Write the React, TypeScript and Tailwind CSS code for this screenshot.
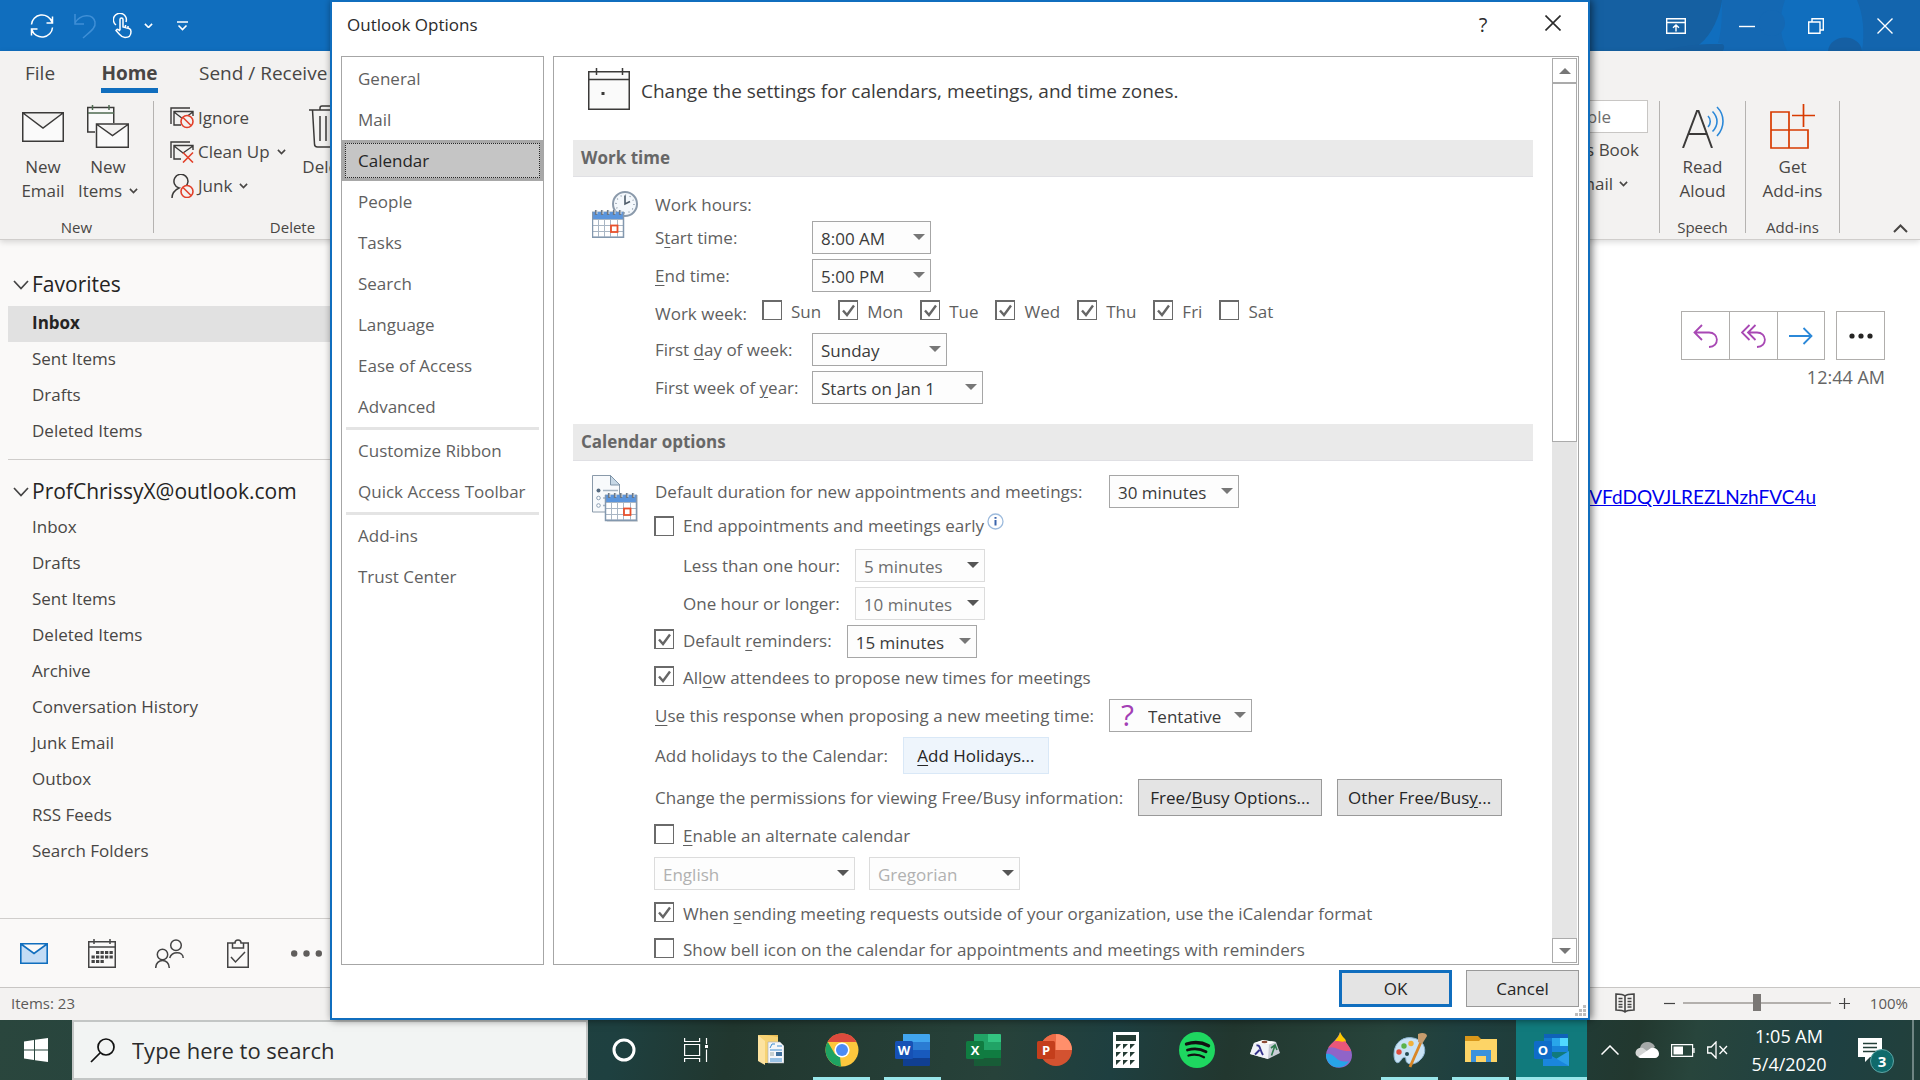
import { useState, type ReactNode } from 'react';

const FOLDER_ROW = 'text-[17px] leading-[34px] pb-0.5';

const navGroups = [
  ['General', 'Mail', 'Calendar', 'People', 'Tasks', 'Search', 'Language', 'Ease of Access', 'Advanced'],
  ['Customize Ribbon', 'Quick Access Toolbar'],
  ['Add-ins', 'Trust Center'],
];

const favorites = ['Inbox', 'Sent Items', 'Drafts', 'Deleted Items'];
const folders = [
  'Inbox',
  'Drafts',
  'Sent Items',
  'Deleted Items',
  'Archive',
  'Conversation History',
  'Junk Email',
  'Outbox',
  'RSS Feeds',
  'Search Folders',
];

const days = [
  { name: 'Sun', on: false },
  { name: 'Mon', on: true },
  { name: 'Tue', on: true },
  { name: 'Wed', on: true },
  { name: 'Thu', on: true },
  { name: 'Fri', on: true },
  { name: 'Sat', on: false },
];

function Key({ children }: { children: ReactNode }) {
  return <span className="underline decoration-1 underline-offset-3">{children}</span>;
}

function Chevron({ className = 'w-[9px]' }: { className?: string }) {
  return (
    <svg viewBox="0 0 10 6" className={className} fill="none" stroke="currentColor" strokeWidth="1.8">
      <path d="M1 1l4 4 4-4" />
    </svg>
  );
}

/* ---------- form parts ---------- */

interface SelectProps {
  id: string;
  value: string;
  width: string;
  tone?: 'normal' | 'muted' | 'disabled';
  label?: string;
  icon?: ReactNode;
}

function Select({ id, value, width, tone = 'normal', label, icon }: SelectProps) {
  const tones = {
    normal: 'border-[#a6a6a6] text-[#3b3b3b]',
    muted: 'border-[#dcdcdc] text-[#6e6e6e]',
    disabled: 'border-[#dcdcdc] text-[#b1b1b1]',
  };
  return (
    <span className={`relative inline-flex h-[33px] shrink-0 ${width}`}>
      <select
        id={id}
        aria-label={label}
        disabled={tone !== 'normal'}
        className={`h-full w-full appearance-none border bg-[#fdfdfd] pt-[2px] pr-5 opacity-100 ${icon ? 'pl-[38px]' : 'pl-2'} ${tones[tone]}`}
      >
        <option>{value}</option>
      </select>
      {icon}
      <svg
        viewBox="0 0 12 6"
        className={`pointer-events-none absolute top-[13px] right-[6px] h-[6px] w-[12px] ${tone === 'normal' ? 'text-[#777]' : 'text-[#555]'}`}
        fill="currentColor"
      >
        <path d="M0 0h12L6 6z" />
      </svg>
    </span>
  );
}

function Check({ id, on }: { id: string; on: boolean }) {
  const [checked, setChecked] = useState(on);
  return (
    <span className="relative mb-[6px] flex size-5 shrink-0">
      <input
        id={id}
        type="checkbox"
        checked={checked}
        onChange={() => setChecked(!checked)}
        className="peer size-5 appearance-none border border-t-2 border-l-2 border-[#6a6a6a] bg-white"
      />
      <svg
        viewBox="0 0 20 20"
        className="pointer-events-none absolute inset-0 hidden peer-checked:block"
        fill="none"
        stroke="#666"
        strokeWidth="2.4"
      >
        <path d="M5 10.5l4 4.5 7-9.5" />
      </svg>
    </span>
  );
}

function CheckRow({ id, on, height = 'h-[41px]', children }: { id: string; on: boolean; height?: string; children: ReactNode }) {
  return (
    <div className={`flex items-center gap-[9px] ${height}`}>
      <Check id={id} on={on} />
      <label htmlFor={id} className="pb-0.5 whitespace-nowrap">
        {children}
      </label>
    </div>
  );
}

function PushButton({ className, children }: { className: string; children: ReactNode }) {
  return (
    <button className={`h-[37px] shrink-0 whitespace-nowrap text-[#262626] ${className}`}>{children}</button>
  );
}

function SectionBar({ children }: { children: ReactNode }) {
  return (
    <h2 className="flex h-[37px] items-center border-b border-[#e0e0e4] bg-[#eaeaea] pl-2 text-[17px] font-bold text-[#676767]">
      {children}
    </h2>
  );
}

/* ---------- dialog icons ---------- */

function CalendarGrid({ x, y }: { x: number; y: number }) {
  return (
    <g transform={`translate(${x} ${y})`}>
      <rect x="0.5" y="3" width="31" height="25" fill="#fff" stroke="#8fa3b8" />
      <rect x="0" y="3" width="32" height="7" fill="#5b95dc" />
      <path d="M0 10.5h32M0 16.5h32M0 22.5h32M6.5 10v18M12.5 10v18M18.5 10v18M25.500 10v18" stroke="#a9b6c4" />
      <path d="M0.500 3v25.500h31V3" fill="none" stroke="#8398ae" strokeWidth="1.500" />
      <path d="M4 1v5M10 1v5M16 1v5M22 1v5M28 1v5" stroke="#6d7885" strokeWidth="2.200" />
      <path d="M5 1v4M11 1v4M17 1v4M23 1v4M29 1v4" stroke="#e8eef5" strokeWidth="0.900" />
      <rect x="19" y="16.500" width="6.500" height="6.500" fill="#fff" stroke="#e8502c" strokeWidth="1.800" />
    </g>
  );
}

function WorkTimeIcon() {
  return (
    <svg viewBox="0 0 46 47" className="h-[47px] w-[46px] shrink-0">
      <circle cx="33" cy="13" r="12" fill="#f4f8fc" stroke="#8b9aab" strokeWidth="2" />
      <circle cx="33" cy="13" r="9" fill="none" stroke="#7c8b9b" strokeWidth="1.200" strokeDasharray="1 3.700" />
      <path d="M33 4.500V13l5-2.500" fill="none" stroke="#4d5b69" strokeWidth="1.600" />
      <CalendarGrid x={0} y={18} />
    </svg>
  );
}

function CalendarOptionsIcon() {
  return (
    <svg viewBox="0 0 46 47" className="h-[47px] w-[46px] shrink-0">
      <path d="M0.500 0.500h18l9 9V37h-27z" fill="#f8fafc" stroke="#8a9aaa" />
      <path d="M18.500 0.500v9.500h9.500z" fill="#c7d8e6" stroke="#7f95a9" />
      <circle cx="6.500" cy="15.500" r="2" fill="#566b80" />
      <circle cx="6.500" cy="23" r="1.800" fill="#fff" stroke="#8ca0b5" />
      <circle cx="6.500" cy="30.500" r="1.800" fill="#fff" stroke="#8ca0b5" />
      <path d="M11 15.500h15M11 23h4M11 30.500h4" stroke="#a5b4c2" strokeWidth="1.500" />
      <path d="M15 46h31V20" fill="none" stroke="#ccc" strokeWidth="1" />
      <CalendarGrid x={13} y={17} />
    </svg>
  );
}

function HeaderCalendarIcon() {
  return (
    <svg viewBox="0 0 42 42" className="size-[42px] shrink-0" fill="none" stroke="#3b3a39" strokeWidth="1.500">
      <rect x="0.750" y="3.750" width="40.500" height="37.500" fill="#fafafa" />
      <path d="M1 11.500h40M8.500 0v7M34.500 0v7" />
      <rect x="13.500" y="24" width="3" height="3" fill="#3b3a39" stroke="none" />
    </svg>
  );
}

/* ---------- dialog ---------- */

function OptionsDialog() {
  const [page, setPage] = useState('Calendar');

  return (
    <div
      role="dialog"
      aria-label="Outlook Options"
      className="absolute inset-x-[330px] top-0 bottom-[60px] z-10 flex flex-col border-2 border-[#106ebe] bg-white text-[17px] text-[#5f5f5f] shadow-[2px_0_8px_rgba(0,0,0,0.55)]"
    >
      <header className="flex h-[54px] shrink-0 items-start pt-2 pl-[15px] text-[#2b2b2b]">
        <h1 className="flex-1 text-[17px] leading-[30px]">Outlook Options</h1>
        <button aria-label="Help" className="h-[30px] w-[70px] text-[20px] leading-[28px]">
          ?
        </button>
        <button aria-label="Close" className="flex h-[26px] w-[70px] items-center justify-center">
          <svg viewBox="0 0 16 16" className="size-4" stroke="currentColor" strokeWidth="1.600">
            <path d="M0.500 0.500l15 15M15.500 0.500l-15 15" />
          </svg>
        </button>
      </header>

      <div className="flex min-h-0 flex-1 gap-[9px] px-[9px]">
        <nav className="w-[203px] shrink-0 border border-[#a6a6a6] pt-px">
          {navGroups.map((group, g) => (
            <div key={g}>
              {g > 0 && <hr className="mx-1 h-[3px] border-0 bg-[#e4e4e4]" />}
              {group.map((item) => (
                <button
                  key={item}
                  onClick={() => setPage(item)}
                  className={`block h-[41px] w-full text-left whitespace-nowrap ${
                    item === page ? 'bg-[#a8a8a8] p-[3px] text-[#262626]' : 'pl-4'
                  }`}
                >
                  {item === page ? (
                    <span className="flex h-full items-center border border-dotted border-[#262626] bg-[#c5c5c5] pl-3">
                      {item}
                    </span>
                  ) : (
                    item
                  )}
                </button>
              ))}
            </div>
          ))}
        </nav>

        <section className="flex min-w-0 flex-1 overflow-hidden border border-[#a6a6a6]">
          <div className="min-w-0 flex-1 overflow-hidden px-[19px]">
            <div className="flex h-[83px] items-start gap-[11px] pt-[11px] pl-[15px]">
              <HeaderCalendarIcon />
              <p className="pt-2 text-[19px] leading-[30px] whitespace-nowrap text-[#3b3b3b]">
                Change the settings for calendars, meetings, and time zones.
              </p>
            </div>

            <SectionBar>Work time</SectionBar>
            <div className="flex items-start gap-4 pt-[14px] pb-5 pl-[19px]">
              <WorkTimeIcon />
              <div>
                <div className="mb-[2px] flex h-7 items-center pl-px">Work hours:</div>
                <div className="flex flex-col gap-[5px]">
                  <div className="flex items-center">
                    <label htmlFor="start" className="w-[158px] pl-px">
                      S<Key>t</Key>art time:
                    </label>
                    <Select id="start" value="8:00 AM" width="w-[119px]" />
                  </div>
                  <div className="flex items-center">
                    <label htmlFor="end" className="w-[158px] pl-px">
                      <Key>E</Key>nd time:
                    </label>
                    <Select id="end" value="5:00 PM" width="w-[119px]" />
                  </div>
                </div>
                <div className="flex h-[41px] items-center">
                  <span className="w-[108px] pt-[2px] pl-px">Work week:</span>
                  <div className="flex gap-[17px]">
                    {days.map((day) => (
                      <CheckRow key={day.name} id={day.name} on={day.on}>
                        {day.name}
                      </CheckRow>
                    ))}
                  </div>
                </div>
                <div className="flex flex-col gap-[5px]">
                  <div className="flex items-center">
                    <label htmlFor="firstday" className="w-[158px] pl-px whitespace-nowrap">
                      First <Key>d</Key>ay of week:
                    </label>
                    <Select id="firstday" value="Sunday" width="w-[135px]" />
                  </div>
                  <div className="flex items-center">
                    <label htmlFor="firstweek" className="w-[158px] pl-px whitespace-nowrap">
                      First week of <Key>y</Key>ear:
                    </label>
                    <Select id="firstweek" value="Starts on Jan 1" width="w-[171px]" />
                  </div>
                </div>
              </div>
            </div>

            <SectionBar>Calendar options</SectionBar>
            <div className="flex items-start gap-4 pt-[14px] pl-[19px] whitespace-nowrap">
              <CalendarOptionsIcon />
              <div>
                <div className="flex items-center">
                  <label htmlFor="duration" className="w-[455px] pl-px">
                    Default duration for new appointments and meetings:
                  </label>
                  <Select id="duration" value="30 minutes" width="w-[130px]" />
                </div>
                <CheckRow id="early" on={false}>
                  End appointments and meetings early
                  <svg viewBox="0 0 17 17" className="mb-3 ml-[3px] inline size-[17px]" fill="none" aria-label="Info">
                    <circle cx="8.500" cy="8.500" r="7.500" stroke="#9dbbdd" strokeWidth="1.300" />
                    <path d="M8.500 7v5.500M8.500 4v1.800" stroke="#3a64ac" strokeWidth="2" />
                  </svg>
                </CheckRow>
                <div className="flex flex-col gap-[5px]">
                  <div className="flex items-center gap-[15px] pl-[29px]">
                    <label htmlFor="short">Less than one hour:</label>
                    <Select id="short" value="5 minutes" width="w-[130px]" tone="muted" />
                  </div>
                  <div className="flex items-center gap-[15px] pl-[29px]">
                    <label htmlFor="long">One hour or longer:</label>
                    <Select id="long" value="10 minutes" width="w-[130px]" tone="muted" />
                  </div>
                  <div className="flex items-center gap-[15px]">
                    <CheckRow id="reminders" on height="h-[33px]">
                      Default <Key>r</Key>eminders:
                    </CheckRow>
                    <Select id="remindertime" label="Reminder time" value="15 minutes" width="w-[130px]" />
                  </div>
                </div>
                <CheckRow id="propose" on>
                  All<Key>o</Key>w attendees to propose new times for meetings
                </CheckRow>
                <div className="flex flex-col gap-[5px]">
                  <div className="flex items-center">
                    <label htmlFor="response" className="w-[455px] pl-px">
                      <Key>U</Key>se this response when proposing a new meeting time:
                    </label>
                    <Select
                      id="response"
                      value="Tentative"
                      width="w-[143px]"
                      icon={
                        <span className="pointer-events-none absolute top-0 left-3 text-[30px] leading-[32px] text-[#a33fb5]">
                          ?
                        </span>
                      }
                    />
                  </div>
                  <div className="flex items-center gap-[15px] pl-px">
                    <span>Add holidays to the Calendar:</span>
                    <PushButton className="w-[146px] border border-[#d9e8f7] bg-[#eef5fc]">
                      <Key>A</Key>dd Holidays...
                    </PushButton>
                  </div>
                  <div className="flex items-center gap-[15px] pl-px">
                    <span>Change the permissions for viewing Free/Busy information:</span>
                    <PushButton className="w-[184px] border border-[#999] bg-[#e4e4e4]">
                      Free/<Key>B</Key>usy Options...
                    </PushButton>
                    <PushButton className="w-[165px] border border-[#999] bg-[#e4e4e4]">
                      Other Free/Bus<Key>y</Key>...
                    </PushButton>
                  </div>
                </div>
                <CheckRow id="alternate" on={false}>
                  <Key>E</Key>nable an alternate calendar
                </CheckRow>
                <div className="mb-[7px] flex gap-[14px]">
                  <Select id="altlang" label="Calendar language" value="English" width="w-[201px]" tone="disabled" />
                  <Select id="alttype" label="Calendar type" value="Gregorian" width="w-[151px]" tone="disabled" />
                </div>
                <CheckRow id="ical" on height="h-9">
                  When <Key>s</Key>ending meeting requests outside of your organization, use the iCalendar format
                </CheckRow>
                <CheckRow id="bell" on={false} height="h-9">
                  Show bell icon on the calendar for appointments and meetings with reminders
                </CheckRow>
              </div>
            </div>
          </div>

          <div className="my-px mr-px flex w-[25px] shrink-0 flex-col bg-[#e5e5e5]">
            <button aria-label="Scroll up" className="flex h-[25px] items-center justify-center border border-[#ababab] bg-white">
              <svg viewBox="0 0 12 6" className="w-3" fill="#777">
                <path d="M6 0l6 6H0z" />
              </svg>
            </button>
            <div className="h-[359px] border border-[#ababab] bg-white" />
            <button aria-label="Scroll down" className="mt-auto flex h-[25px] items-center justify-center border border-[#ababab] bg-white">
              <svg viewBox="0 0 12 6" className="w-3" fill="#777">
                <path d="M0 0h12L6 6z" />
              </svg>
            </button>
          </div>
        </section>
      </div>

      <footer className="relative flex h-[53px] shrink-0 justify-end gap-[14px] px-[9px] pt-[5px]">
        <PushButton className="w-[113px] border-3 border-[#106ebe] bg-[#e4e4e4]">OK</PushButton>
        <PushButton className="w-[113px] border border-[#999] bg-[#e4e4e4]">Cancel</PushButton>
        <svg viewBox="0 0 11 11" className="absolute right-[2px] bottom-[2px] size-[11px]" fill="#bdbdbd">
          <path d="M8 0h3v3H8zM8 4h3v3H8zM4 4h3v3H4zM8 8h3v3H8zM4 8h3v3H4zM0 8h3v3H0z" />
        </svg>
      </footer>
    </div>
  );
}

/* ---------- main window ---------- */

function TitleBar() {
  return (
    <header className="relative flex h-[51px] shrink-0 items-center justify-between overflow-hidden bg-[#106ebe] text-white">
      <svg viewBox="0 0 340 51" className="absolute top-0 right-0 h-[51px] w-[340px]">
        <path d="M0 0h142c-2 16-10 34-22 44-6 5-14 7-24 7H0z" fill="#1560a2" />
        <path d="M80 51c10-2 30-8 62-7 5 0 3 4 1 7z" fill="#155ea0" />
        <path d="M142 0h63c-6 16-6 34 2 51h-64c2-4 2-8-5-8 4-13 4-28 4-43z" fill="#1468b3" />
        <circle cx="192" cy="23" r="13" fill="#1468b3" />
        <path d="M277 0c6 14 8 32 5 51h58V0z" fill="#1365ae" />
        <path d="M248 51c2-18 32-18 34 0z" fill="#155fa3" />
      </svg>
      <div className="relative flex items-center pl-[30px]">
        <button aria-label="Send/Receive All">
          <svg viewBox="0 0 24 24" className="size-6" fill="none" stroke="currentColor" strokeWidth="1.500">
            <path d="M1.500 10.500A10.500 10 0 0 1 22 8M22.500 13.500A10.500 10 0 0 1 2 16M22.500 2.500v6.500h-6M1.500 21.500v-6.500h6" />
          </svg>
        </button>
        <button aria-label="Undo" className="ml-[19px] text-[#3f8fd6]">
          <svg viewBox="0 0 24 26" className="h-[26px] w-6" fill="none" stroke="currentColor" strokeWidth="1.500">
            <path d="M2 1v10h9M2 10C7 1 20 0 22 9c1 6-4 9-12 16" />
          </svg>
        </button>
        <button aria-label="Touch/Mouse Mode" className="ml-4 flex items-center gap-3">
          <svg viewBox="0 0 19 26" className="h-[26px] w-[19px]" fill="none" stroke="currentColor" strokeWidth="1.500">
            <path d="M3 12A6.500 6.500 0 1 1 13 9M7 17V6.500c0-2 3-2 3 0V14l6 1.500c1.500.5 2 1.500 2 3 0 5-2 6-6 6-4 0-4-2-9-7 1-2 3-1 4 .5M12.500 12v3M15 13v3" />
          </svg>
          <Chevron />
        </button>
        <button aria-label="Customize Quick Access Toolbar" className="ml-6">
          <svg viewBox="0 0 11 10" className="w-[11px]" fill="none" stroke="currentColor" strokeWidth="1.600">
            <path d="M0 1h11M1.500 4.500l4 4 4-4" />
          </svg>
        </button>
      </div>
      <div className="relative flex items-center gap-[53px] pr-[27px]">
        <button aria-label="Ribbon Display Options">
          <svg viewBox="0 0 20 16" className="h-4 w-5" fill="none" stroke="currentColor" strokeWidth="1.400">
            <path d="M.7.7h18.600v14.600H.7zM.7 4.500h18.600M10 13.500V7M7 9.800L10 7l3 2.800" />
          </svg>
        </button>
        <button aria-label="Minimize">
          <svg viewBox="0 0 16 16" className="size-4" stroke="currentColor" strokeWidth="1.400">
            <path d="M0 8.500h16" />
          </svg>
        </button>
        <button aria-label="Restore">
          <svg viewBox="0 0 16 16" className="size-4" fill="none" stroke="currentColor" strokeWidth="1.400">
            <path d="M.7 4h11.300v11.300H.7zM4 4V.7h11.300V12H12" />
          </svg>
        </button>
        <button aria-label="Close window">
          <svg viewBox="0 0 16 16" className="size-4" stroke="currentColor" strokeWidth="1.400">
            <path d="M.5.5l15 15M15.500.5l-15 15" />
          </svg>
        </button>
      </div>
    </header>
  );
}

function RibbonGroup({ label, width, children }: { label: string; width: string; children: ReactNode }) {
  return (
    <div className={`flex h-[132px] shrink-0 flex-col border-r border-[#b5b3b1] ${width}`}>
      <div className="flex flex-1 items-start">{children}</div>
      <div className="text-center text-[15px] leading-[11px] text-[#484644]">{label}</div>
    </div>
  );
}

function BigButton({ icon, className, children }: { icon: ReactNode; className: string; children: ReactNode }) {
  return (
    <button className={`flex shrink-0 flex-col items-center pt-[3px] leading-6 ${className}`}>
      <span className="mb-[6px] flex h-[45px] items-center">{icon}</span>
      {children}
    </button>
  );
}

function MailStack({ children }: { children: ReactNode }) {
  return (
    <svg viewBox="0 0 24 22" className="h-[22px] w-6" fill="none" stroke="#3b3a39" strokeWidth="1.400">
      <path d="M1 17V1h19" />
      <path d="M23 9V4.500H4V18h7M4 5l9 7 10-7" />
      {children}
    </svg>
  );
}

function Ribbon() {
  return (
    <div className="relative z-1 flex h-[189px] shrink-0 flex-col border-b border-[#d0cecc] bg-[#f3f2f1] text-[17px] text-[#484644] shadow-[0_2px_6px_rgba(0,0,0,0.15)]">
      <nav className="flex h-[50px] items-start pt-[7px] pl-[25px] text-[19px] leading-[30px]">
        <button className="w-[76px] text-left">File</button>
        <button className="w-[57px] border-b-5 border-[#106ebe] text-center font-bold">Home</button>
        <button className="ml-[41px] whitespace-nowrap">Send / Receive</button>
      </nav>
      <div className="flex min-w-0 flex-1 justify-between">
        <div className="flex">
          <RibbonGroup label="New" width="w-[154px]">
            <BigButton
              className="ml-[10px] w-[66px]"
              icon={
                <svg viewBox="0 0 42 30" className="w-[42px]" fill="#fafafa" stroke="#3b3a39" strokeWidth="1.500">
                  <path d="M.75.75h40.500v28.500H.75zM1 1l20 15L41 1" />
                </svg>
              }
            >
              <span>New</span>
              <span>Email</span>
            </BigButton>
            <BigButton
              className="w-[64px]"
              icon={
                <svg viewBox="0 0 42 43" className="w-[42px]" fill="#fafafa" stroke="#3b3a39" strokeWidth="1.500">
                  <path d="M8 27H.75V2.500h26V18" />
                  <path d="M1 8h26M5.500 0v5M22 0v5" stroke="#4f6b52" />
                  <path d="M9.500 19h31.800v23.200H9.500zM10 19.500l15.500 11L41 19.500" />
                </svg>
              }
            >
              <span>New</span>
              <span className="flex items-center gap-[7px] whitespace-nowrap">
                Items <Chevron />
              </span>
            </BigButton>
          </RibbonGroup>
          <RibbonGroup label="Delete" width="w-[278px]">
            <div className="flex w-[138px] flex-col pl-4 leading-[34px]">
              <button className="flex items-center gap-1">
                <MailStack>
                  <circle cx="17" cy="14.500" r="6" fill="#f3f2f1" stroke="#e2402a" strokeWidth="1.600" />
                  <path d="M13 10.500l8 8" stroke="#e2402a" strokeWidth="1.600" />
                </MailStack>
                Ignore
              </button>
              <button className="flex items-center gap-1 whitespace-nowrap">
                <MailStack>
                  <path d="M13 11.500l10 10M23 11.500l-10 10" stroke="#e2402a" strokeWidth="1.600" />
                </MailStack>
                Clean Up <Chevron className="ml-[3px] w-[9px]" />
              </button>
              <button className="flex items-center gap-1">
                <svg viewBox="0 0 24 24" className="size-6" fill="none" stroke="#3b3a39" strokeWidth="1.500">
                  <path d="M2 24c0-5 3-8 7-10a7 7 0 1 1 6-1" />
                  <circle cx="17" cy="17.500" r="6" fill="#f3f2f1" stroke="#e2402a" strokeWidth="1.600" />
                  <path d="M13 13.500l8 8" stroke="#e2402a" strokeWidth="1.600" />
                </svg>
                Junk <Chevron className="ml-[3px] w-[9px]" />
              </button>
            </div>
            <BigButton
              className="w-[72px]"
              icon={
                <svg viewBox="0 0 38 43" className="w-[38px]" fill="none" stroke="#3b3a39" strokeWidth="1.500">
                  <path d="M0 5h38M3.500 5l2 34c0 2 1 3 3 3h21c2 0 3-1 3-3l2-34M11 5V3c0-1 1-2 2-2h12c1 0 2 1 2 2v2M11 11v25M17 11v25M23 11v25M29 11v25" />
                </svg>
              }
            >
              <span>Delete</span>
            </BigButton>
          </RibbonGroup>
        </div>
        <div className="flex">
          <div className="flex h-[132px] w-[260px] flex-col items-end border-r border-[#b5b3b1] pr-[11px] leading-[34px]">
            <input
              aria-label="Search People"
              defaultValue="Search People"
              className="-mt-px h-[33px] w-[200px] border border-[#c8c6c4] bg-white pr-9 text-right text-[#6e6e6e]"
            />
            <button className="pr-[9px]">Address Book</button>
            <button className="flex items-center gap-[6px] pr-5">
              Filter Email <Chevron />
            </button>
          </div>
          <RibbonGroup label="Speech" width="w-[86px]">
            <BigButton
              className="w-full"
              icon={
                <svg viewBox="0 0 42 42" className="w-[42px]" fill="none" strokeWidth="2">
                  <path d="M1 42L15 5h1.500L30 42M6 28h19" stroke="#3b3a39" />
                  <path d="M26 10c3 3 3 8 0 11M30.500 5.500c6 6 6 14 0 20M35 1c8 8 8 20 0 29" stroke="#2b88d8" strokeWidth="1.600" />
                </svg>
              }
            >
              <span>Read</span>
              <span>Aloud</span>
            </BigButton>
          </RibbonGroup>
          <RibbonGroup label="Add-ins" width="w-[94px]">
            <BigButton
              className="w-full"
              icon={
                <svg viewBox="0 0 45 45" className="w-[45px]" fill="none" stroke="#d83b01" strokeWidth="1.700">
                  <path d="M1 8h18v36H1zM1 26h37v18H19V26M33.500 0v23M22 11.500h23" />
                </svg>
              }
            >
              <span>Get</span>
              <span>Add-ins</span>
            </BigButton>
          </RibbonGroup>
          <button aria-label="Collapse the Ribbon" className="flex w-[80px] items-end justify-end pr-3 pb-[6px]">
            <svg viewBox="0 0 15 9" className="w-[15px]" fill="none" stroke="currentColor" strokeWidth="2">
              <path d="M1 8l6.500-6.500L14 8" />
            </svg>
          </button>
        </div>
      </div>
    </div>
  );
}

function FolderHeading({ children }: { children: ReactNode }) {
  return (
    <h2 className="flex h-9 items-center pl-[13px] text-[21px] text-[#252423]">
      <svg viewBox="0 0 16 10" className="mr-[3px] w-4" fill="none" stroke="#444" strokeWidth="1.700">
        <path d="M1 1l7 7.500L15 1" />
      </svg>
      {children}
    </h2>
  );
}

function Sidebar() {
  return (
    <aside className="flex w-[380px] shrink-0 flex-col bg-[#faf9f8] text-[#484644]">
      <div className="flex-1 pt-[27px]">
        <FolderHeading>Favorites</FolderHeading>
        <ul className="mt-[3px]">
          {favorites.map((name, i) => (
            <li
              key={name}
              className={`${FOLDER_ROW} ${i === 0 ? 'ml-2 bg-[#e1e1e1] pl-6 font-bold text-[#252423]' : 'pl-8'}`}
            >
              {name}
            </li>
          ))}
        </ul>
        <hr className="mt-[9px] mb-[14px] ml-2 border-[#cfcdcb]" />
        <FolderHeading>ProfChrissyX@outlook.com</FolderHeading>
        <ul>
          {folders.map((name) => (
            <li key={name} className={`${FOLDER_ROW} pl-8`}>
              {name}
            </li>
          ))}
        </ul>
      </div>
      <nav className="flex h-[69px] items-center border-t border-[#d0cecc] pl-5">
        <button aria-label="Mail" className="w-[68px]">
          <svg viewBox="0 0 28 21" className="w-7" fill="#c3dcf5" stroke="#106ebe" strokeWidth="1.600">
            <path d="M.8.800h26.400v19.400H.8zM1 1l13 9.500L27 1" />
          </svg>
        </button>
        <button aria-label="Calendar" className="w-[67px]">
          <svg viewBox="0 0 28 29" className="w-7" fill="none" stroke="#444" strokeWidth="1.500">
            <path d="M.75 2.750h26.500v25.500H.75zM1 8h26M6 0v5M22 0v5" />
            <path d="M8 13.500h17M3.500 18h21.500M3.500 22.500h13" strokeWidth="3" strokeDasharray="3.300 1.200" />
          </svg>
        </button>
        <button aria-label="People" className="w-[72px]">
          <svg viewBox="0 0 29 29" className="w-[29px]" fill="none" stroke="#444" strokeWidth="1.500">
            <circle cx="7.500" cy="15.500" r="5.200" />
            <path d="M.7 29c0-10 13.600-10 13.600 0M14.700 19c2-7 13.500-7 13.500 0" />
            <circle cx="21" cy="6.200" r="5.300" />
          </svg>
        </button>
        <button aria-label="Tasks" className="w-[64px]">
          <svg viewBox="0 0 22 29" className="w-[22px]" fill="none" stroke="#444" strokeWidth="1.500">
            <path d="M6 4H.75v24.250h20.500V4H16M5.500 4v5h11V4H14c0-4-6-4-6 0zM4 18l4.500 5L18 13" />
          </svg>
        </button>
        <button aria-label="More">
          <svg viewBox="0 0 31 7" className="w-[31px]" fill="#605e5c">
            <circle cx="3.200" cy="3.500" r="3.200" />
            <circle cx="15.500" cy="3.500" r="3.200" />
            <circle cx="27.800" cy="3.500" r="3.200" />
          </svg>
        </button>
      </nav>
    </aside>
  );
}

function ReadingPane() {
  return (
    <main className="flex flex-1 flex-col items-end bg-white pt-[71px] pr-[35px]">
      <div className="flex gap-[11px]">
        <div className="flex border border-[#b0aeac]">
          <button aria-label="Reply" className="flex h-[47px] w-[48px] items-center justify-center border-r border-[#b0aeac]">
            <svg viewBox="0 0 25 24" className="w-[25px]" fill="none" stroke="#a848b4" strokeWidth="1.800">
              <path d="M9 1L1.500 8.500 9 16M1.500 8.500H16c10 0 11 14 0 14.500" />
            </svg>
          </button>
          <button aria-label="Reply All" className="flex h-[47px] w-[48px] items-center justify-center border-r border-[#b0aeac]">
            <svg viewBox="0 0 25 24" className="w-[25px]" fill="none" stroke="#a848b4" strokeWidth="1.800">
              <path d="M8.500 1L1 8.500 8.500 16M14.500 1L7 8.500l7.500 7.500M7 8.500h9c10 0 11 14 0 14.500" />
            </svg>
          </button>
          <button aria-label="Forward" className="flex h-[47px] w-[46px] items-center justify-center">
            <svg viewBox="0 0 24 18" className="w-6" fill="none" stroke="#2b88d8" strokeWidth="1.800">
              <path d="M0 9h22M14.500 1l8 8-8 8" />
            </svg>
          </button>
        </div>
        <button aria-label="More actions" className="flex size-[49px] items-center justify-center border border-[#b0aeac]">
          <svg viewBox="0 0 24 6" className="w-6" fill="#252423">
            <circle cx="3" cy="3" r="2.600" />
            <circle cx="12" cy="3" r="2.600" />
            <circle cx="21" cy="3" r="2.600" />
          </svg>
        </button>
      </div>
      <time className="mt-[5px] text-[18px] leading-6 text-[#666]">12:44 AM</time>
      <a href="#form" className="mt-[94px] mr-[69px] font-['Lato',sans-serif] text-[19px] leading-[28px] text-[#0000ee] underline">
        VFdDQVJLREZLNzhFVC4u
      </a>
    </main>
  );
}

function StatusBar() {
  return (
    <div className="flex h-[33px] shrink-0 items-center justify-between border-t border-[#c8c6c4] bg-[#f3f2f1] pr-3 pb-[2px] pl-[11px] text-[15px] text-[#5c5a58]">
      <span>Items: 23</span>
      <div className="flex items-center">
        <svg viewBox="0 0 20 20" className="mr-[29px] w-5" fill="none" stroke="#444" strokeWidth="1.600">
          <path d="M10 3v15M10 3C8 1 4 1 1 1v16c4 0 7 0 9 2 2-2 5-2 9-2V1c-3 0-7 0-9 2zM3.500 5.500h4M3.500 8.500h4M3.500 11.500h4M3.500 14h4M12.500 5.500h4M12.500 8.500h4M12.500 11.500h4M12.500 14h4" />
        </svg>
        <button aria-label="Zoom out">
          <svg viewBox="0 0 11 11" className="w-[11px]" stroke="#444" strokeWidth="1.200">
            <path d="M0 5.500h11" />
          </svg>
        </button>
        <input
          type="range"
          aria-label="Zoom"
          defaultValue={50}
          className="mx-2 h-[17px] w-[148px] appearance-none bg-transparent [&::-webkit-slider-runnable-track]:h-[2px] [&::-webkit-slider-runnable-track]:bg-[#b3b0ad] [&::-webkit-slider-thumb]:-mt-2 [&::-webkit-slider-thumb]:h-[17px] [&::-webkit-slider-thumb]:w-2 [&::-webkit-slider-thumb]:appearance-none [&::-webkit-slider-thumb]:bg-[#7a7775]"
        />
        <button aria-label="Zoom in">
          <svg viewBox="0 0 11 11" className="w-[11px]" stroke="#444" strokeWidth="1.200">
            <path d="M0 5.500h11M5.500 0v11" />
          </svg>
        </button>
        <span className="ml-5">100%</span>
      </div>
    </div>
  );
}

/* ---------- taskbar ---------- */

function OfficeTile({ letter, color }: { letter: string; color: string }) {
  return (
    <>
      <rect x="0" y="8" width="18" height="18" rx="1.500" fill={color} />
      <text x="9" y="22" textAnchor="middle" fontSize="13" fontWeight="700" fill="#fff">
        {letter}
      </text>
    </>
  );
}

const apps: { name: string; running?: boolean; active?: boolean; icon: ReactNode }[] = [
  {
    name: 'Documents',
    icon: (
      <svg viewBox="0 0 26 32" className="h-8 w-[26px]">
        <path d="M5 1h15v28H5z" fill="#e9bd55" />
        <path d="M0 1h8l12 2v26H7z" fill="#f7d374" />
        <path d="M0 1l7 6v24l-7-4z" fill="#fde3a0" />
        <path d="M10 8h12l4 4v17H10z" fill="#f5f7fa" stroke="#a5adb5" strokeWidth=".6" />
        <path d="M12 14l2-4h3M19 12h5M12 16h12M12 25h12M12 27h12" stroke="#3f8ed0" fill="none" />
        <path d="M18 18h6v4h-6z" fill="#41709c" />
        <path d="M12 19h4M12 21h4" stroke="#9aa" />
      </svg>
    ),
  },
  {
    name: 'Chrome',
    running: true,
    icon: (
      <svg viewBox="0 0 34 34" className="size-[34px]">
        <circle cx="17" cy="17" r="16.500" fill="#fdc73d" />
        <path d="M2.700 8.750A16.500 16.500 0 0 1 31.300 8.750L17 9z" fill="#dc4a3d" />
        <path d="M2.700 8.750h28.600a16.500 16.500 0 0 0-28.600 0l7.800 12z" fill="#dc4a3d" />
        <path d="M2.700 8.750L9.900 21 17 25l-1 8.500A16.500 16.500 0 0 1 2.700 8.750z" fill="#1ea362" />
        <path d="M23.500 21L16 33.500 15 24z" fill="#fdc73d" />
        <circle cx="17" cy="17" r="7.600" fill="#fff" />
        <circle cx="17" cy="17" r="6" fill="#4c8bf5" />
      </svg>
    ),
  },
  {
    name: 'Word',
    running: true,
    icon: (
      <svg viewBox="0 0 36 34" className="h-[34px] w-9">
        <path d="M8 1h26a1 1 0 0 1 1 1v7H8z" fill="#41a5ee" />
        <path d="M8 9h27v8H8z" fill="#2b7cd3" />
        <path d="M8 17h27v8H8z" fill="#185abd" />
        <path d="M8 25h27v7a1 1 0 0 1-1 1H8z" fill="#103f91" />
        <OfficeTile letter="W" color="#1651b5" />
      </svg>
    ),
  },
  {
    name: 'Excel',
    icon: (
      <svg viewBox="0 0 36 34" className="h-[34px] w-9">
        <path d="M8 1h14v16H8z" fill="#21a366" />
        <path d="M22 1h12a1 1 0 0 1 1 1v7H22z" fill="#33c481" />
        <path d="M22 9h13v8H22z" fill="#21a366" />
        <path d="M8 17h14v8H8zM22 17h13v8H22z" fill="#107c41" />
        <path d="M8 25h27v7a1 1 0 0 1-1 1H8z" fill="#185c37" />
        <OfficeTile letter="X" color="#107c41" />
      </svg>
    ),
  },
  {
    name: 'PowerPoint',
    icon: (
      <svg viewBox="0 0 36 34" className="h-[34px] w-9">
        <circle cx="19" cy="17" r="16" fill="#d35230" />
        <path d="M19 1v16H3A16 16 0 0 1 19 1z" fill="#ed6c47" />
        <path d="M19 1a16 16 0 0 1 16 16H19z" fill="#ff8f6b" />
        <OfficeTile letter="P" color="#c43e1c" />
      </svg>
    ),
  },
  {
    name: 'Calculator',
    icon: (
      <svg viewBox="0 0 26 36" className="h-9 w-[26px]">
        <path d="M0 0h26v36H0z" fill="#fff" />
        <path d="M3 3h20v6H3zM3 12h5l-5 5zM10 12h5l-5 5zM17 12h5l-5 5zM3 20h5l-5 5zM10 20h5l-5 5zM17 20h5l-5 5zM3 28h5l-5 5zM10 28h5l-5 5zM17 28h5l-5 5z" fill="#243b34" />
      </svg>
    ),
  },
  {
    name: 'Spotify',
    icon: (
      <svg viewBox="0 0 36 36" className="size-9" fill="none" stroke="#111" strokeLinecap="round">
        <circle cx="18" cy="18" r="18" fill="#1ed760" stroke="none" />
        <path d="M7.500 12c8-2.500 16-1.500 22 1.700" strokeWidth="3.400" />
        <path d="M8.500 18c7-2 13.500-1 18.500 1.800" strokeWidth="2.800" />
        <path d="M9.500 23.500c5.500-1.500 11-.8 15.500 1.700" strokeWidth="2.300" />
      </svg>
    ),
  },
  {
    name: 'DrRacket',
    icon: (
      <svg viewBox="0 0 30 22" className="mr-[5px] h-[22px] w-[30px]">
        <path d="M4 4l9-3 13 2 4 11-12 6L0 15z" fill="#c9cdd6" />
        <path d="M4 4l15 1.500L18 20 0 15z" fill="#f1f2f7" />
        <path d="M4 4l9-3 13 2-7 2.500z" fill="#fff" />
        <ellipse cx="14.500" cy="3" rx="3" ry="1.200" fill="#8f4a36" />
        <path d="M6.500 6.500c4-1 3 4 6.500 9.500M9.500 11l-4.500 4.500" stroke="#35338c" strokeWidth="1.900" fill="none" />
        <path d="M21.500 16.500L25 6.500M21 9l4-3 2 5" stroke="#2f7a4d" strokeWidth="1.600" fill="none" />
      </svg>
    ),
  },
  {
    name: 'Paint 3D',
    icon: (
      <svg viewBox="0 0 28 36" className="h-9 w-7">
        <path d="M15 0c-2 8-14 14-14 23 0 17 26 17 26 0C27 14 18 10 15 0z" fill="#9064c8" />
        <path d="M15 0c-1 5-4 7-6 10 5 0 9 2 10 0 2 2 3-2 0-4-2-2-3-4-4-6z" fill="#ffc800" />
        <path d="M9 9.500C6 12 4 14 3 16c6-3 12 4 23 3-1-4-4-7-6-10-3 2-7-1-11 .5z" fill="#ea5779" />
        <path d="M1 22c4-1 7 1 10 4 4 4 9 4 13 3-5 9-20 9-23-4z" fill="#27a4e8" />
      </svg>
    ),
  },
  {
    name: 'Paint',
    running: true,
    icon: (
      <svg viewBox="0 0 36 36" className="size-9">
        <path d="M2 22C2 10 12 4 21 6c12 2 15 14 8 21-6 7-15 6-15 1 0-4-3-3-5 0-3 5-7 3-7-6z" fill="#c9e3f5" stroke="#8fb6d4" />
        <circle cx="7" cy="20" r="2.700" fill="#df4d3d" />
        <circle cx="12" cy="14" r="2.700" fill="#5bb349" />
        <circle cx="19" cy="11.500" r="2.700" fill="#f1b13a" />
        <circle cx="15" cy="22" r="2" fill="#244a52" />
        <path d="M29 10L18 35" stroke="#d98726" strokeWidth="2.800" />
        <path d="M26 2c4-2 9-1 9 2l-5 8-4-2z" fill="#c79c6d" />
      </svg>
    ),
  },
  {
    name: 'File Explorer',
    running: true,
    icon: (
      <svg viewBox="0 0 32 28" className="h-7 w-8">
        <path d="M0 0h13l3 3v5H0z" fill="#d9971a" />
        <path d="M0 5h14l2-2h16v23H0z" fill="#fdd466" />
        <path d="M6 14h20v12h-5v-6H11v6H6z" fill="#3a92dc" />
      </svg>
    ),
  },
  {
    name: 'Outlook',
    active: true,
    icon: (
      <svg viewBox="0 0 36 34" className="h-[34px] w-9">
        <path d="M10 1h24v14H10z" fill="#0f62b8" />
        <path d="M10 5h8v14h-8z" fill="#1479cf" />
        <path d="M18 5h8v8h-8z" fill="#29a6ea" />
        <path d="M26 5h8v8h-8z" fill="#50d9ff" />
        <path d="M18 13h16v6H18z" fill="#1884d8" />
        <path d="M9 18l13 8 13-8v15H9z" fill="#2a9ee8" />
        <path d="M9 18l26 15H9z" fill="#1a86dd" />
        <OfficeTile letter="O" color="#0f6cc8" />
      </svg>
    ),
  },
];

function Taskbar() {
  return (
    <footer className="flex h-[60px] shrink-0 bg-[linear-gradient(100deg,#2a463d_0%,#1e4040_32%,#21372f_38%,#27423a_52%,#1e3f40_58%,#22372f_64%,#27443b_72%,#1f4040_76%,#22382f_85%,#28453c_88%,#1e4042_95%,#22403b_100%)]">
      <button aria-label="Start" className="flex w-[72px] shrink-0 items-center justify-center">
        <svg viewBox="0 0 24 24" className="size-6" fill="#fff">
          <path d="M0 3.400l10-1.400v9.500H0zM11 1.800L24 0v11.500H11zM0 12.500h10V22L0 20.600zM11 12.500h13V24l-13-1.800z" />
        </svg>
      </button>
      <label className="flex w-[516px] shrink-0 items-center gap-[17px] border-2 border-[#c3c6c5] bg-[#f2f4f3] pl-4">
        <svg viewBox="0 0 25 25" className="w-[25px] shrink-0" fill="none" stroke="#111" strokeWidth="1.700">
          <circle cx="16" cy="9" r="8" />
          <path d="M10 15L1 24" />
        </svg>
        <input
          aria-label="Type here to search"
          placeholder="Type here to search"
          className="h-full min-w-0 flex-1 bg-transparent text-[22px] text-[#2b2b2b] placeholder:text-[#2b2b2b]"
        />
      </label>
      <button aria-label="Cortana" className="flex w-[72px] shrink-0 items-center justify-center">
        <svg viewBox="0 0 24 24" className="size-6" fill="none" stroke="#fff" strokeWidth="3">
          <circle cx="12" cy="12" r="10" />
        </svg>
      </button>
      <button aria-label="Task View" className="flex w-[72px] shrink-0 items-center justify-center">
        <svg viewBox="0 0 24 24" className="size-6" fill="none" stroke="#fff" strokeWidth="1.200">
          <path d="M.6 0v3.500h15V0M.6 6.500h15v11H.6zM.6 24v-3.500h15V24M22.500 0v6M22.500 11.500V24" />
          <path d="M21 7h3v3h-3z" fill="#fff" stroke="none" />
        </svg>
      </button>
      <div className="flex pl-[3px]">
        {apps.map((app) => (
          <button
            key={app.name}
            aria-label={app.name}
            className={`relative flex w-[71px] shrink-0 items-center justify-center ${app.active ? 'bg-[#117a7c]' : ''}`}
          >
            {app.icon}
            {(app.running || app.active) && (
              <span className={`absolute bottom-0 h-[3px] bg-[#99e6ea] ${app.active ? 'inset-x-0' : 'inset-x-[7px]'}`} />
            )}
          </button>
        ))}
      </div>
      <div className="ml-auto flex items-center text-white">
        <button aria-label="Show hidden icons">
          <svg viewBox="0 0 18 10" className="w-[18px]" fill="none" stroke="currentColor" strokeWidth="1.500">
            <path d="M.5 9.500L9 1l8.500 8.500" />
          </svg>
        </button>
        <svg viewBox="0 0 24 16" className="ml-4 w-6">
          <path d="M5 7C5 3 8 0 12 0c4 0 7 2 8 5l-8 6z" fill="#a5a9a8" />
          <path d="M1 13c-2-5 3-8 7-7l12 9H5c-2 0-3-1-4-2z" fill="#d3d5d4" />
          <path d="M3 15l13-9c5-1 8 3 8 6 0 2-2 4-4 4H5z" fill="#fff" />
        </svg>
        <svg viewBox="0 0 24 13" className="ml-3 w-6" fill="none" stroke="currentColor" strokeWidth="1.200">
          <path d="M.6.6h21v11.800H.6zM23 4v5" />
          <path d="M2.500 2.500h9.500v8H2.500z" fill="currentColor" stroke="none" />
        </svg>
        <svg viewBox="0 0 21 18" className="ml-3 w-[21px]" fill="none" stroke="currentColor" strokeWidth="1.300">
          <path d="M.7 6h3.500L9 1v16l-4.800-5H.7zM12.500 5l7.500 8M20 5l-7.500 8" />
        </svg>
        <div className="w-[122px] text-center text-[18px] leading-7">
          <div>1:05 AM</div>
          <div>5/4/2020</div>
        </div>
        <button aria-label="Notifications" className="relative mr-[30px] ml-2 size-6">
          <svg viewBox="0 0 24 24" className="size-6">
            <path d="M0 0h24v19H12l-5 5v-5H0z" fill="#fff" />
            <path d="M5 5.500h14M5 9.500h14M5 13.500h14" stroke="#24403a" strokeWidth="1.300" />
          </svg>
          <span className="absolute top-[11px] left-3 flex size-6 items-center justify-center rounded-full border border-[#5fa5a5] bg-[#0f6a6b] text-[15px] font-bold">
            3
          </span>
        </button>
        <span className="mr-[6px] h-[60px] w-[2px] bg-[#6f8583]" />
      </div>
    </footer>
  );
}

export default function App() {
  return (
    <div className="relative flex min-h-screen flex-col overflow-hidden bg-white font-['Open_Sans',sans-serif]">
      <TitleBar />
      <Ribbon />
      <div className="flex flex-1">
        <Sidebar />
        <ReadingPane />
      </div>
      <StatusBar />
      <Taskbar />
      <OptionsDialog />
    </div>
  );
}
